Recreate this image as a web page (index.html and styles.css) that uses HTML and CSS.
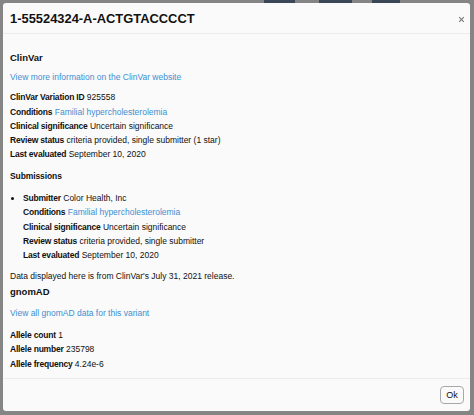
FILE: index.html
```html
<!DOCTYPE html>
<html>
<head>
<meta charset="utf-8">
<link rel="stylesheet" href="styles.css">
</head>
<body>
<div class="backdrop">
  <span class="bg-block b1"></span><span class="bg-block b2"></span><span class="bg-block b3"></span>
</div>
<div class="modal">
  <header class="modal-header">
    <h1 class="title">1-55524324-A-ACTGTACCCCT</h1>
    <button class="close" aria-label="Close">
      <svg width="7" height="7" viewBox="0 0 7 7"><path d="M1.2 1.2 L5.8 5.8 M5.8 1.2 L1.2 5.8" stroke="#777" stroke-width="1.1"/></svg>
    </button>
  </header>
  <div class="modal-body">
    <h2 class="section">ClinVar</h2>
    <p class="link-line"><a class="link">View more information on the ClinVar website</a></p>
    <dl class="attrs">
      <div><dt>ClinVar Variation ID</dt> <dd>925558</dd></div>
      <div><dt>Conditions</dt> <dd><a class="link">Familial hypercholesterolemia</a></dd></div>
      <div><dt>Clinical significance</dt> <dd>Uncertain significance</dd></div>
      <div><dt>Review status</dt> <dd>criteria provided, single submitter (1 star)</dd></div>
      <div><dt>Last evaluated</dt> <dd>September 10, 2020</dd></div>
    </dl>
    <h3 class="subsection">Submissions</h3>
    <ul class="submissions">
      <li>
        <dl class="attrs">
          <div><dt>Submitter</dt> <dd>Color Health, Inc</dd></div>
          <div><dt>Conditions</dt> <dd><a class="link">Familial hypercholesterolemia</a></dd></div>
          <div><dt>Clinical significance</dt> <dd>Uncertain significance</dd></div>
          <div><dt>Review status</dt> <dd>criteria provided, single submitter</dd></div>
          <div><dt>Last evaluated</dt> <dd>September 10, 2020</dd></div>
        </dl>
      </li>
    </ul>
    <p class="note">Data displayed here is from ClinVar's July 31, 2021 release.</p>
    <h2 class="section section-gnomad">gnomAD</h2>
    <p class="link-line link-line-gnomad"><a class="link">View all gnomAD data for this variant</a></p>
    <dl class="attrs">
      <div><dt>Allele count</dt> <dd>1</dd></div>
      <div><dt>Allele number</dt> <dd>235798</dd></div>
      <div><dt>Allele frequency</dt> <dd>4.24e-6</dd></div>
    </dl>
  </div>
  <footer class="modal-footer">
    <button class="ok">Ok</button>
  </footer>
</div>
</body>
</html>
```
FILE: styles.css
```css
html, body {
  margin: 0;
  padding: 0;
}
body {
  width: 474px;
  height: 415px;
  background: #858585;
  font-family: "Liberation Sans", Arial, sans-serif;
  color: #111;
  position: relative;
  overflow: hidden;
  padding: 3px 4px 4px 3px;
  box-sizing: border-box;
}
.backdrop {
  position: absolute;
  left: 0;
  top: 0;
  width: 474px;
  height: 3px;
}
.bg-block {
  position: absolute;
  top: 0;
  height: 3px;
  background: #3b4756;
}
.b1 { left: 264px; width: 31px; }
.b2 { left: 319px; width: 33px; }
.b3 { left: 372px; width: 28px; }
.modal {
  position: relative;
  background: #fafafa;
  border-radius: 3px;
  height: 100%;
  display: flex;
  flex-direction: column;
}
.modal-header {
  display: flex;
  align-items: center;
  justify-content: space-between;
  height: 30px;
  padding: 0 7px;
  border-bottom: 1px solid #ececec;
}
.title {
  margin: 0;
  font-size: 12.9px;
  font-weight: 700;
  line-height: 16px;
  padding-top: 1px;
}
.close {
  border: 0;
  background: none;
  padding: 0;
  width: 9px;
  height: 9px;
  display: flex;
  align-items: center;
  justify-content: center;
  margin-top: 3px;
  margin-right: -3px;
}
.modal-body {
  flex: 1;
  padding: 16px 7px 0 7px;
  font-size: 8.5px;
  line-height: 14.3px;
}
.section {
  margin: 0 0 5px 0;
  font-size: 9.5px;
  font-weight: 700;
  line-height: 15px;
}
.section-gnomad {
  margin-top: 1px;
  margin-bottom: 7px;
}
.subsection {
  margin: 7px 0 8px 0;
  font-size: 8.5px;
  font-weight: 700;
  letter-spacing: -0.1px;
  line-height: 14.3px;
}
.link-line {
  margin: 0 0 6px 0;
}
.link-line-gnomad {
  margin-bottom: 8px;
}
.link {
  color: #3d8fd1;
  text-decoration: none;
}
.attrs {
  margin: 0;
}
.attrs dt, .attrs dd {
  display: inline;
  margin: 0;
}
.attrs dt {
  font-weight: 700;
  letter-spacing: -0.2px;
}
.submissions {
  margin: 0;
  padding-left: 13px;
}
.note {
  margin: 6px 0 0 0;
}
.modal-footer {
  height: 32px;
  border-top: 1px solid #ececec;
  display: flex;
  align-items: center;
  justify-content: flex-end;
  padding: 0 6px;
}
.ok {
  font-family: "Liberation Sans", Arial, sans-serif;
  font-size: 9px;
  background: #fafafa;
  border: 1px solid #a8a8a8;
  border-radius: 4px;
  padding: 0;
  width: 24px;
  height: 18px;
  color: #111;
}
```
